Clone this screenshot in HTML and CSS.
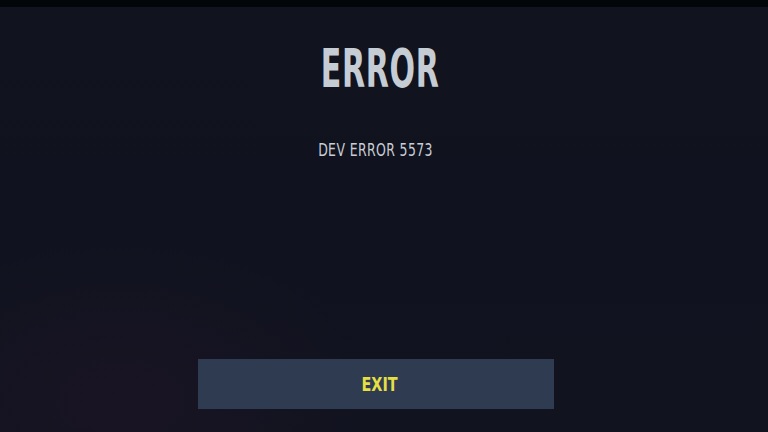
FILE: index.html
```html
<!DOCTYPE html>
<html>
<head>
<meta charset="utf-8">
<link rel="stylesheet" href="styles.css">
</head>
<body>
<div class="topbar"></div>
<main class="screen">
  <h1 class="title"><span class="squeeze">ERROR</span></h1>
  <p class="code"><span class="squeeze-sm">DEV ERROR 5573</span></p>
  <div class="spacer"></div>
  <button class="exit"><span class="squeeze-btn">EXIT</span></button>
</main>
</body>
</html>
```

FILE: styles.css
```css
html, body {
  margin: 0;
  padding: 0;
  width: 768px;
  height: 432px;
  overflow: hidden;
  background: #11141f;
  font-family: "DejaVu Sans Condensed", "DejaVu Sans", sans-serif;
}
body {
  display: flex;
  flex-direction: column;
  background:
    radial-gradient(ellipse 260px 160px at 120px 400px, rgba(26, 20, 36, 0.9), rgba(26, 20, 36, 0) 100%),
    linear-gradient(180deg, #11141e 0%, #10131f 50%, #11131f 100%);
}
.topbar {
  height: 7px;
  background: #020608;
  flex: none;
}
.screen {
  flex: 1;
  display: flex;
  flex-direction: column;
  align-items: center;
}
.title {
  margin: 34px 8px 0 0;
  height: 56px;
  line-height: 56px;
  font-size: 53px;
  font-weight: bold;
  color: #c6ccd3;
  letter-spacing: 1px;
}
.squeeze {
  display: inline-block;
  transform: scaleX(0.63);
}
.code {
  margin: 43px 18px 0 0;
  height: 20px;
  line-height: 20px;
  font-size: 18px;
  color: #c9cdd5;
  letter-spacing: 0.5px;
}
.squeeze-sm {
  display: inline-block;
  transform: scaleX(0.77);
}
.spacer {
  flex: 1;
}
.exit {
  width: 356px;
  height: 50px;
  margin: 0 0 23px 0;
  border: none;
  background: #2f3b51;
  color: #e6df43;
  font-family: "DejaVu Sans Condensed", "DejaVu Sans", sans-serif;
  font-weight: bold;
  font-size: 20px;
  padding: 0 0 0 8px;
  transform: translateX(-8px);
}
.squeeze-btn {
  display: inline-block;
  transform: scaleX(0.8);
}
```
